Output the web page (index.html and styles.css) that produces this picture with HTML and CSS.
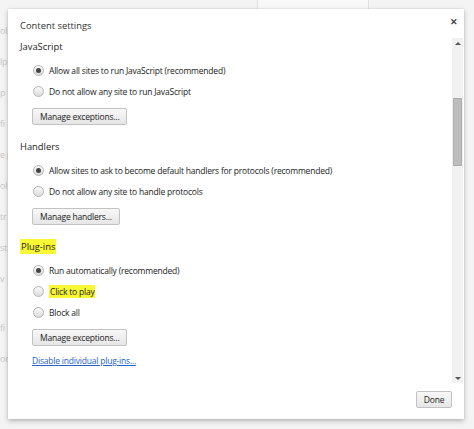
FILE: index.html
```html
<!DOCTYPE html>
<html lang="en">
<head>
    <meta charset="UTF-8">
    <meta name="viewport" content="width=device-width, initial-scale=1.0">
    <title>Content settings</title>
    <link rel="stylesheet" href="styles.css">
</head>
<body>
    <div class="page">
        <div class="search-box"></div>
        <div class="page-side">
            <span>ol</span><span>lp</span><span>p</span><span>fi</span><span>e p</span><span>ol</span><span>tr</span><span>st</span><span>v</span><span></span><span>fi</span><span>or</span>
        </div>
    </div>

    <div class="dialog">
        <div class="dialog-header">
            <h1>Content settings</h1>
            <span class="close">&#x2715;</span>
        </div>
        <div class="dialog-body">
            <div class="content">
                <section class="group">
                    <h2>JavaScript</h2>
                    <label class="radio"><span class="dot checked"></span>Allow all sites to run JavaScript (recommended)</label>
                    <label class="radio"><span class="dot"></span>Do not allow any site to run JavaScript</label>
                    <button type="button">Manage exceptions...</button>
                </section>
                <section class="group">
                    <h2>Handlers</h2>
                    <label class="radio"><span class="dot checked"></span>Allow sites to ask to become default handlers for protocols (recommended)</label>
                    <label class="radio"><span class="dot"></span>Do not allow any site to handle protocols</label>
                    <button type="button">Manage handlers...</button>
                </section>
                <section class="group">
                    <h2><mark>Plug-ins</mark></h2>
                    <label class="radio"><span class="dot checked"></span>Run automatically (recommended)</label>
                    <label class="radio"><span class="dot"></span><mark>Click to play</mark></label>
                    <label class="radio"><span class="dot"></span>Block all</label>
                    <button type="button">Manage exceptions...</button>
                    <a class="link" href="#plugins">Disable individual plug-ins...</a>
                </section>
            </div>
            <div class="scrollbar">
                <span class="arrow up"></span>
                <div class="track">
                    <div class="thumb"></div>
                </div>
                <span class="arrow down"></span>
            </div>
        </div>
        <div class="dialog-footer">
            <button type="button">Done</button>
        </div>
    </div>
</body>
</html>
```

FILE: styles.css
```css
body {
    margin: 0;
    font-family: "Open Sans", "Noto Sans", Arial, sans-serif;
    font-size: 8.5px;
    letter-spacing: -0.2px;
    color: #222;
    background: #f4f4f4;
    width: 474px;
    height: 429px;
    overflow: hidden;
}
.page {
    height: 429px;
    position: relative;
}
.search-box {
    position: absolute;
    left: 257px;
    top: -4px;
    width: 110px;
    height: 12px;
    border: 1px solid #e2e2e2;
    background: #f8f8f8;
}
.page-side {
    display: flex;
    flex-direction: column;
    gap: 18px;
    padding-top: 24px;
    color: #c4c4c4;
    font-size: 9px;
}
.dialog {
    position: absolute;
    left: 8px;
    top: 9px;
    width: 456px;
    height: 410px;
    background: #fff;
    box-shadow: 0 2px 5px rgba(0, 0, 0, 0.25), 0 0 1px rgba(0, 0, 0, 0.2);
    display: flex;
    flex-direction: column;
}
.dialog-header {
    height: 30px;
    display: flex;
    align-items: center;
    justify-content: space-between;
    padding: 0 6px 0 12px;
}
.dialog-header h1 {
    margin: 0;
    padding-top: 2px;
    font-size: 9.4px;
    letter-spacing: 0;
    font-weight: normal;
    color: #333;
}
.close {
    font-size: 9px;
    font-weight: bold;
    color: #444;
    padding-bottom: 6px;
}
.dialog-body {
    display: flex;
    height: 344px;
}
.content {
    flex: 1;
    padding-left: 12px;
}
.group h2 {
    margin: 0;
    height: 16px;
    line-height: 16px;
    font-size: 9.4px;
    letter-spacing: 0;
    font-weight: normal;
    color: #222;
}
.group {
    margin-bottom: 14px;
}
.group h2 + .radio {
    margin-top: 5px;
}
.radio {
    display: flex;
    align-items: center;
    height: 21px;
    padding-left: 13px;
}
.dot {
    width: 9px;
    height: 9px;
    border-radius: 50%;
    border: 1px solid #b5b5b5;
    background: linear-gradient(#fafafa, #dcdcdc);
    margin-right: 5px;
    display: flex;
    align-items: center;
    justify-content: center;
}
.dot.checked::after {
    content: "";
    width: 5px;
    height: 5px;
    border-radius: 50%;
    background: #444;
}
mark {
    background: #f8f834;
    color: inherit;
    padding: 1px 1px;
}
button {
    display: block;
    font-family: inherit;
    font-size: 8.5px;
    letter-spacing: -0.2px;
    color: #222;
    height: 17px;
    padding: 0 7px;
    margin-top: 6px;
    margin-left: 12px;
    border: 1px solid #c2c2c2;
    border-radius: 2px;
    background: linear-gradient(#f8f8f8, #e6e6e6);
    line-height: 14px;
}
.link,
.link:visited {
    display: block;
    margin: 8px 0 0 12px;
    color: #2563c9;
    line-height: 14px;
}
.scrollbar {
    width: 11px;
    margin-right: 1px;
    background: #f1f1f1;
    display: flex;
    flex-direction: column;
    margin-top: -1px;
}
.arrow {
    height: 10px;
    display: flex;
    justify-content: center;
    align-items: center;
}
.arrow::after {
    content: "";
    border-left: 3px solid transparent;
    border-right: 3px solid transparent;
}
.arrow.up::after {
    border-bottom: 3px solid #555;
}
.arrow.down::after {
    border-top: 3px solid #555;
}
.track {
    flex: 1;
    padding-top: 50px;
}
.thumb {
    height: 66px;
    margin: 0 1px;
    background: #bdbdbd;
    border: 1px solid #adadad;
}
.dialog-footer {
    flex: 1;
    display: flex;
    justify-content: flex-end;
    align-items: flex-start;
    padding: 8px 12px 0 0;
}
.dialog-footer button {
    margin: 0;
    width: 36px;
    padding: 0;
}
```
